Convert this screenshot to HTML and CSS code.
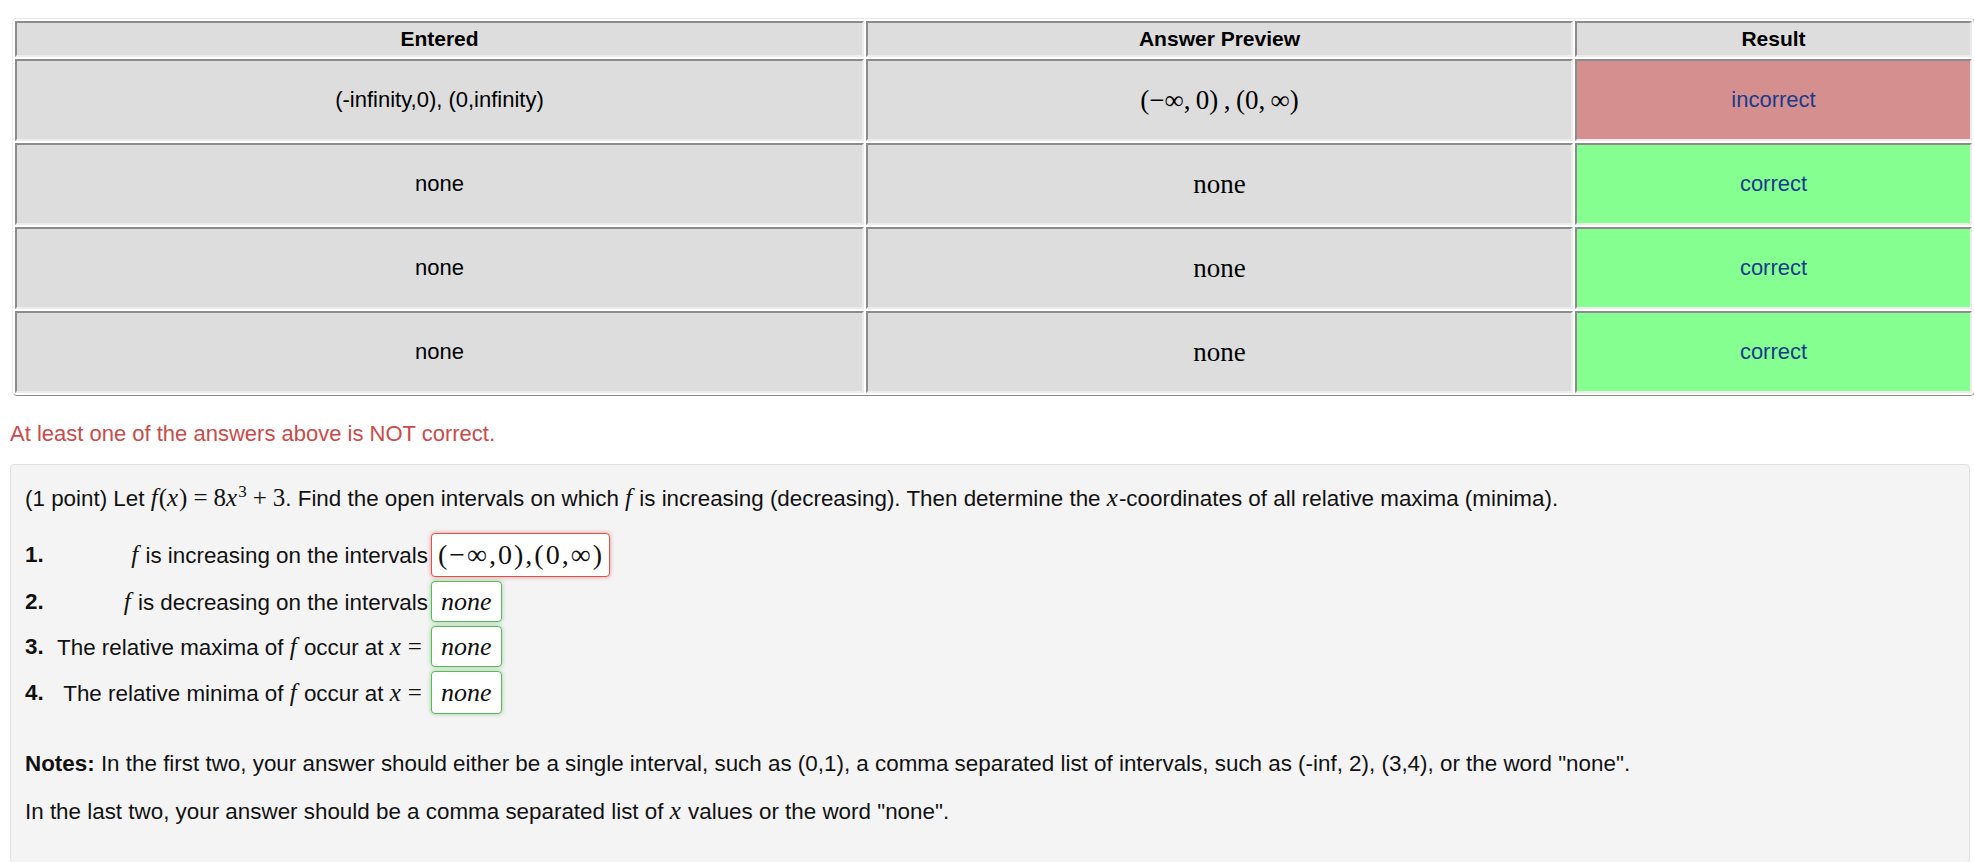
FILE: index.html
```html
<!DOCTYPE html>
<html lang="en">
<head>
    <meta charset="UTF-8">
    <title>Problem 4</title>
    <link rel="stylesheet" href="styles.css">
</head>
<body>
    <!-- Results of last attempt -->
    <table class="attempt-results">
        <tr>
            <th class="col-entered">Entered</th>
            <th class="col-preview">Answer Preview</th>
            <th class="col-result">Result</th>
        </tr>
        <tr>
            <td>(-infinity,0), (0,infinity)</td>
            <td class="preview">(&minus;&infin;,&thinsp;0)&thinsp;,&thinsp;(0,&thinsp;&infin;)</td>
            <td class="result incorrect">incorrect</td>
        </tr>
        <tr>
            <td>none</td>
            <td class="preview">none</td>
            <td class="result correct">correct</td>
        </tr>
        <tr>
            <td>none</td>
            <td class="preview">none</td>
            <td class="result correct">correct</td>
        </tr>
        <tr>
            <td>none</td>
            <td class="preview">none</td>
            <td class="result correct">correct</td>
        </tr>
    </table>

    <p class="attempt-message">At least one of the answers above is NOT correct.</p>

    <!-- Problem text -->
    <div class="problem">
        <p class="statement">(1 point) Let <span class="math"><i>f</i>(<i>x</i>)<span class="op">=</span>8<i>x</i><sup>3</sup><span class="op">+</span>3</span>. Find the open intervals on which <span class="math"><i>f</i></span> is increasing (decreasing). Then determine the <span class="math"><i>x</i></span>-coordinates of all relative maxima (minima).</p>

        <div class="parts">
            <b class="num">1.</b>
            <span class="prompt"><span class="math"><i>f</i></span> is increasing on the intervals</span>
            <span class="answer wrong wide">(&minus;&infin;,0),(0,&infin;)</span>

            <b class="num">2.</b>
            <span class="prompt"><span class="math"><i>f</i></span> is decreasing on the intervals</span>
            <span class="answer right"><i>none</i></span>

            <b class="num">3.</b>
            <span class="prompt">The relative maxima of <span class="math"><i>f</i></span> occur at <span class="math"><i>x</i><span class="op">=</span></span></span>
            <span class="answer right"><i>none</i></span>

            <b class="num">4.</b>
            <span class="prompt">The relative minima of <span class="math"><i>f</i></span> occur at <span class="math"><i>x</i><span class="op">=</span></span></span>
            <span class="answer right last"><i>none</i></span>
        </div>

        <p class="notes"><b>Notes:</b> In the first two, your answer should either be a single interval, such as (0,1), a comma separated list of intervals, such as (-inf, 2), (3,4), or the word "none".</p>
        <p class="notes">In the last two, your answer should be a comma separated list of <span class="math"><i>x</i></span> values or the word "none".</p>
    </div>
</body>
</html>
```

FILE: styles.css
```css
/* General */
body {
    margin: 0;
    font-family: "Liberation Sans", Arial, sans-serif;
    font-size: 22px;
    color: #111;
    background: #ffffff;
}

.math {
    font-family: "Liberation Serif", "Times New Roman", serif;
    font-size: 25px;
}

.math i {
    margin-right: 1px;
}

.math .op {
    margin: 0 6px;
}

.math sup {
    font-size: 17px;
    line-height: 0;
}

/* Attempt results table */
.attempt-results {
    margin: 18px 0 0 12px;
    width: 1963px;
    table-layout: fixed;
    border-collapse: separate;
    border-spacing: 2px;
    border: 1px solid;
    border-color: #e8e8e8 #8c8c8c #8c8c8c #e8e8e8;
    border-radius: 5px;
}

.attempt-results th,
.attempt-results td {
    box-sizing: border-box;
    padding: 0;
    text-align: center;
    vertical-align: middle;
    background: #dddddd;
    border: 2px solid;
    border-color: #8c8c8c #ececec #ececec #8c8c8c;
}

.attempt-results th {
    height: 36px;
    font-size: 21px;
    font-weight: bold;
    color: #000;
}

.attempt-results td {
    height: 82px;
    color: #000;
}

.col-entered { width: 849px; }
.col-preview { width: 707px; }

.attempt-results .preview {
    font-family: "Liberation Serif", "Times New Roman", serif;
    font-size: 27px;
}

.attempt-results .result {
    color: #183c8c;
}

.attempt-results .incorrect {
    background: #d68f8f;
}

.attempt-results .correct {
    background: #86ff91;
}

.attempt-message {
    margin: 26px 0 0 10px;
    line-height: 24px;
    color: #cb4b4b;
}

/* Problem box */
.problem {
    margin: 18px 0 0 10px;
    width: 1960px;
    box-sizing: border-box;
    padding: 19px 14px 36px;
    background: #f4f4f4;
    border: 1px solid #e0e0e0;
    border-radius: 4px;
    font-size: 22.4px;
}

.problem p {
    margin: 0;
    line-height: 28px;
}

.parts {
    display: grid;
    grid-template-columns: 32px max-content max-content;
    align-items: center;
    row-gap: 4px;
    margin-top: 20px;
}

.parts .num {
    font-weight: bold;
}

.parts .prompt {
    justify-self: end;
    padding-right: 3px;
}

.answer {
    justify-self: start;
    box-sizing: border-box;
    height: 41px;
    display: flex;
    align-items: center;
    padding: 0 9px;
    background: #ffffff;
    border: 1px solid;
    border-radius: 4px;
    font-family: "Liberation Serif", "Times New Roman", serif;
    font-size: 26px;
}

.answer.wide {
    height: 44px;
    padding: 0 5px 0 6px;
    font-size: 28px;
    letter-spacing: 2px;
}

.answer.wrong {
    border-color: #d9534f;
    box-shadow: 0 0 4px rgba(217, 83, 79, 0.6);
}

.answer.right {
    border-color: #5cb85c;
    box-shadow: 0 0 4px rgba(92, 184, 92, 0.6);
}

.answer.last {
    height: 43px;
}

.problem .notes {
    margin-top: 36px;
}

.problem .notes + .notes {
    margin-top: 19px;
}
```
